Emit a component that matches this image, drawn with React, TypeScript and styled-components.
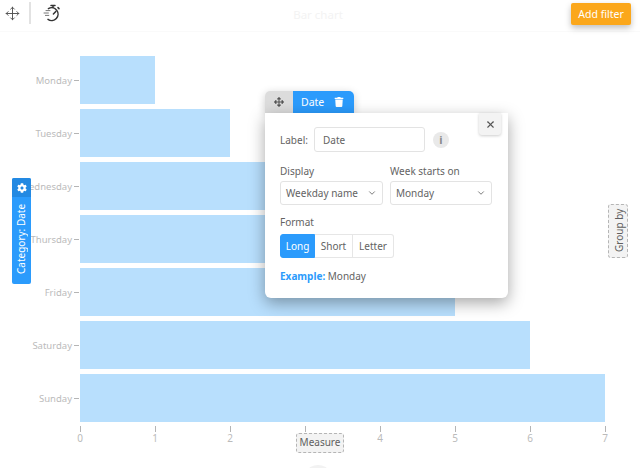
import React from "react";
import styled, { createGlobalStyle } from "styled-components";
import { FaArrowsAlt, FaCog, FaTrash } from "react-icons/fa";
import { ChevronDown, Move, X } from "lucide-react";

const Global = createGlobalStyle`
  html, body { margin: 0; padding: 0; background: #fff; }
  * { box-sizing: border-box; }
  body { font-family: "Noto Sans", "Open Sans", sans-serif; color: #636363; }
`;

const Page = styled.div`
  position: relative;
  width: 640px;
  height: 468px;
  overflow: hidden;
  background: #fff;
`;

const Toolbar = styled.header`
  display: grid;
  grid-template-columns: 1fr auto 1fr;
  align-items: center;
  height: 32px;
  padding: 0 9px 3px 5px;
  border-bottom: 1px solid #fafafa;
`;

const ToolGroup = styled.div`
  display: flex;
  align-items: center;
  margin-top: -2px;
`;

const ToolIcon = styled.span`
  display: flex;
  color: #4f4f4f;
`;

const Divider = styled.span`
  width: 2px;
  height: 22px;
  margin: 0 12px 0 9px;
  background: #e2e2e2;
`;

const Title = styled.div`
  font-size: 11.5px;
  color: #f3f3f3;
`;

const FilterButton = styled.button`
  justify-self: end;
  width: 60px;
  height: 22px;
  margin: 0;
  padding: 0;
  border: 0;
  border-radius: 2px;
  background: #fba71b;
  color: #fff;
  font: 400 10.5px "Noto Sans", sans-serif;
  box-shadow: 0 3px 6px rgba(0, 0, 0, 0.25);
`;

const Chart = styled.main`
  padding-top: 24px;
`;

const Rows = styled.div`
  display: flex;
  flex-direction: column;
  gap: 5px;
`;

const Row = styled.div`
  display: flex;
  align-items: center;
  height: 48px;
`;

const DayLabel = styled.span`
  width: 72px;
  text-align: right;
  font-size: 9.5px;
  color: #bbb;
  white-space: nowrap;
`;

const YTick = styled.span`
  width: 5px;
  height: 1px;
  margin: 0 1px 0 2px;
  background: #b5b5b5;
`;

const Bar = styled.div<{ $value: number }>`
  width: ${(p) => p.$value * 75}px;
  height: 48px;
  background: #b8dffd;
`;

const XAxis = styled.div`
  display: flex;
  justify-content: space-between;
  width: 525px;
  margin: 4px 0 0 80px;
`;

const XTick = styled.div`
  display: flex;
  flex-direction: column;
  align-items: center;
  width: 0;
  font-size: 10px;
  line-height: 12px;
  color: #bbb;
  &::before {
    content: "";
    width: 1px;
    height: 6px;
    background: #b5b5b5;
    flex: none;
  }
`;

const CategoryPill = styled.div`
  position: absolute;
  left: 12px;
  top: 178px;
  display: flex;
  flex-direction: column;
  align-items: center;
  width: 19px;
  height: 106px;
  border-radius: 2px;
  background: #2b9bfc;
  color: #fff;
  overflow: hidden;
`;

const PillGear = styled.div`
  display: flex;
  align-items: center;
  justify-content: center;
  width: 100%;
  height: 19px;
  flex: none;
  background: #2389e2;
`;

const VerticalText = styled.span`
  flex: 1;
  writing-mode: vertical-rl;
  transform: rotate(180deg);
  padding-top: 4px;
  text-align: center;
  font-size: 10px;
  line-height: 19px;
  white-space: nowrap;
`;

const DropZone = styled.div`
  position: absolute;
  border: 1px dashed #b5b5b5;
  border-radius: 3px;
  background: #f3f3f3;
  color: #5f5f5f;
  font-size: 10px;
  white-space: nowrap;
`;

const MeasureZone = styled(DropZone)`
  left: 296px;
  top: 433px;
  width: 48px;
  height: 20px;
  line-height: 16px;
  text-align: center;
`;

const GroupZone = styled(DropZone)`
  left: 608px;
  top: 204px;
  width: 20px;
  height: 54px;
  line-height: 20px;
  padding-top: 1px;
  text-align: center;
  writing-mode: vertical-rl;
  transform: rotate(180deg);
`;

const BottomHandle = styled.div`
  position: absolute;
  left: 308px;
  top: 465px;
  width: 20px;
  height: 12px;
  border-radius: 50%;
  background: #f2f2f2;
`;

const Popover = styled.section`
  position: absolute;
  left: 265px;
  top: 91px;
  width: 243px;
`;

const TabBar = styled.div`
  display: flex;
  height: 22px;
  width: 89px;
  border-radius: 5px 5px 0 0;
  overflow: hidden;
  box-shadow: 0 2px 8px rgba(0, 0, 0, 0.2);
`;

const DragTab = styled.div`
  display: flex;
  align-items: center;
  justify-content: center;
  width: 28px;
  background: #dcdcdc;
  color: #555;
`;

const ActiveTab = styled.div`
  display: flex;
  align-items: center;
  gap: 10px;
  flex: 1;
  padding-left: 8px;
  background: #2b9bfc;
  color: #fff;
  font-size: 10.5px;
`;

const Card = styled.div`
  position: relative;
  height: 185px;
  padding: 14px 15px 0;
  border-radius: 0 0 6px 6px;
  background: #fff;
  box-shadow: 0 5px 16px rgba(0, 0, 0, 0.35);
`;

const CloseButton = styled.button`
  position: absolute;
  top: 0;
  right: 7px;
  display: flex;
  align-items: center;
  justify-content: center;
  width: 22px;
  height: 22px;
  padding: 0;
  border: 0;
  border-radius: 0 0 3px 3px;
  background: #f3f3f3;
  color: #555;
  box-shadow: 0 1px 3px rgba(0, 0, 0, 0.2);
`;

const LabelRow = styled.div`
  display: flex;
  align-items: center;
  height: 25px;
`;

const FieldText = styled.span`
  font-size: 10px;
  color: #636363;
`;

const LabelName = styled(FieldText)`
  width: 34px;
`;

const TextInput = styled.div`
  display: flex;
  align-items: center;
  width: 111px;
  height: 25px;
  margin-right: 8px;
  padding-left: 8px;
  border: 1px solid #e3e3e3;
  border-radius: 3px;
  font-size: 10px;
`;

const InfoBadge = styled.span`
  width: 16px;
  height: 16px;
  border-radius: 50%;
  background: #e9e9e9;
  color: #8a8a8a;
  font: 700 11px/16px "Noto Sans", sans-serif;
  text-align: center;
`;

const SelectGrid = styled.div`
  display: grid;
  grid-template-columns: 103px 102px;
  column-gap: 7px;
  margin-top: 12px;
`;

const SelectField = styled.div`
  display: flex;
  flex-direction: column;
  gap: 3px;
`;

const SelectBox = styled.div`
  display: flex;
  align-items: center;
  justify-content: space-between;
  height: 24px;
  padding: 0 5px;
  border: 1px solid #e3e3e3;
  border-radius: 3px;
  font-size: 10px;
  color: #636363;
  white-space: nowrap;
`;

const FormatBlock = styled.div`
  display: flex;
  flex-direction: column;
  gap: 5px;
  margin-top: 10px;
`;

const Segments = styled.div`
  display: flex;
  align-self: flex-start;
  height: 24px;
`;

const Segment = styled.div<{ $active?: boolean; $w: number }>`
  display: flex;
  align-items: center;
  justify-content: center;
  width: ${(p) => p.$w}px;
  border: 1px solid ${(p) => (p.$active ? "#2b9bfc" : "#e6e6e6")};
  border-left-width: ${(p) => (p.$active ? 1 : 0)}px;
  background: ${(p) => (p.$active ? "#2b9bfc" : "#fff")};
  color: ${(p) => (p.$active ? "#fff" : "#636363")};
  font-size: 10px;
  &:first-child { border-radius: 3px 0 0 3px; }
  &:last-child { border-radius: 0 3px 3px 0; }
`;

const Example = styled.div`
  margin-top: 11px;
  font-size: 10px;
  color: #636363;
`;

const ExampleKey = styled.b`
  color: #2b9bfc;
  font-weight: 700;
`;

const Stopwatch = () => (
  <svg width="18" height="18" viewBox="0 0 18 18" fill="none" stroke="#333" strokeWidth="1.5" strokeLinecap="round">
    <path d="M5.4 4.6 A6.4 6.4 0 1 1 5 15.4" />
    <path d="M8 1.4h4M10 1.4v1.8M15 3.6l1 1" />
    <path d="M10.4 10l2.4-2.6" />
    <path d="M3 6.6h4M1 9h4.4M2.4 11.4h3.4" strokeWidth="1" stroke="#777" />
  </svg>
);

const days: [string, number][] = [
  ["Monday", 1],
  ["Tuesday", 2],
  ["Wednesday", 3],
  ["Thursday", 4],
  ["Friday", 5],
  ["Saturday", 6],
  ["Sunday", 7],
];

export default function App() {
  return (
    <Page>
      <Global />
      <Toolbar>
        <ToolGroup>
          <ToolIcon><Move size={15} strokeWidth={1.5} /></ToolIcon>
          <Divider />
          <ToolIcon><Stopwatch /></ToolIcon>
        </ToolGroup>
        <Title>Bar chart</Title>
        <FilterButton>Add filter</FilterButton>
      </Toolbar>
      <Chart>
        <Rows>
          {days.map(([day, value]) => (
            <Row key={day}>
              <DayLabel>{day}</DayLabel>
              <YTick />
              <Bar $value={value} />
            </Row>
          ))}
        </Rows>
        <XAxis>
          {[0, 1, 2, 3, 4, 5, 6, 7].map((n) => (
            <XTick key={n}>{n}</XTick>
          ))}
        </XAxis>
      </Chart>

      <CategoryPill>
        <PillGear><FaCog size={10} /></PillGear>
        <VerticalText>Category: Date</VerticalText>
      </CategoryPill>
      <MeasureZone>Measure</MeasureZone>
      <GroupZone>Group by</GroupZone>
      <BottomHandle />

      <Popover>
        <TabBar>
          <DragTab><FaArrowsAlt size={10} /></DragTab>
          <ActiveTab>Date <FaTrash size={10} /></ActiveTab>
        </TabBar>
        <Card>
          <CloseButton><X size={11} strokeWidth={2.4} /></CloseButton>
          <LabelRow>
            <LabelName>Label:</LabelName>
            <TextInput>Date</TextInput>
            <InfoBadge>i</InfoBadge>
          </LabelRow>
          <SelectGrid>
            <SelectField>
              <FieldText>Display</FieldText>
              <SelectBox>Weekday name <ChevronDown size={10} /></SelectBox>
            </SelectField>
            <SelectField>
              <FieldText>Week starts on</FieldText>
              <SelectBox>Monday <ChevronDown size={10} /></SelectBox>
            </SelectField>
          </SelectGrid>
          <FormatBlock>
            <FieldText>Format</FieldText>
            <Segments>
              <Segment $active $w={35}>Long</Segment>
              <Segment $w={38}>Short</Segment>
              <Segment $w={41}>Letter</Segment>
            </Segments>
          </FormatBlock>
          <Example><ExampleKey>Example:</ExampleKey> Monday</Example>
        </Card>
      </Popover>
    </Page>
  );
}
